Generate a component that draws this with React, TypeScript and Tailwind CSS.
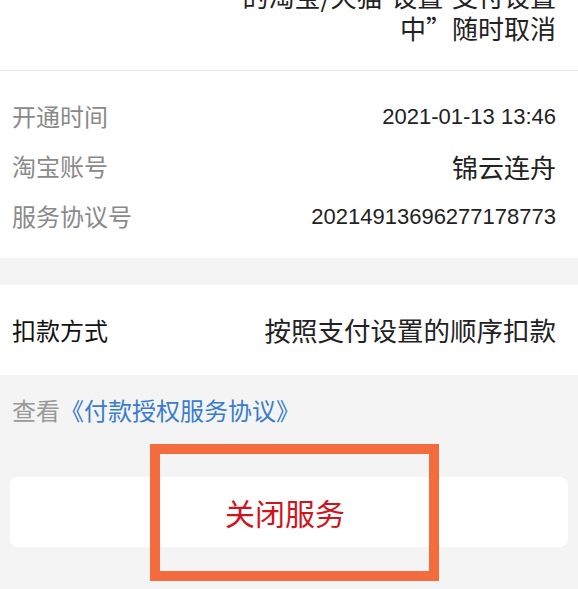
import React from "react";

const cjk = { fontFamily: '"Noto Sans CJK SC", "Noto Sans", sans-serif' };
const num = { fontFamily: '"Liberation Sans", "Noto Sans CJK SC", sans-serif' };

export default function App() {
  return (
    <div className="relative w-[578px] h-[589px] overflow-hidden bg-[#f4f4f4]" style={cjk}>
      <div className="h-[71px] overflow-hidden bg-white border-b border-[#ebebeb]">
        <div className="-mt-[19px] pr-[22px] text-right text-[26px] leading-[30px] text-[#222]">
          <div>
            的淘宝/天猫<span style={num}>“</span>设置<span style={num}>”</span>支付设置
          </div>
          <div>中”随时取消</div>
        </div>
      </div>

      <div className="bg-white pt-[20px] pb-[17px] px-[12px]">
        <div className="flex h-[50px] items-center justify-between pr-[10px]">
          <span className="text-[24px] text-[#8a8a8a]">开通时间</span>
          <span className="text-[22px] text-[#222]" style={num}>2021-01-13 13:46</span>
        </div>
        <div className="flex h-[50px] items-center justify-between pr-[10px]">
          <span className="text-[24px] text-[#8a8a8a]">淘宝账号</span>
          <span className="text-[26px] text-[#222]">锦云连舟</span>
        </div>
        <div className="flex h-[50px] items-center justify-between pr-[10px]">
          <span className="text-[24px] text-[#8a8a8a]">服务协议号</span>
          <span className="text-[22px] text-[#222]" style={num}>20214913696277178773</span>
        </div>
      </div>

      <div className="mt-[27px] flex h-[90px] items-center justify-between bg-white pl-[12px] pr-[22px]">
        <span className="text-[24px] text-[#111]">扣款方式</span>
        <span className="text-[26.5px] text-[#222]">按照支付设置的顺序扣款</span>
      </div>

      <div className="pt-[20px] pl-[12px] text-[24px] leading-[30px]">
        <span className="text-[#999]">查看</span>
        <span className="text-[#3a7ccc]">《付款授权服务协议》</span>
      </div>

      <div className="mx-[10px] mt-[52px] flex h-[70px] items-center justify-center rounded-[8px] bg-white">
        <span className="mr-[8px] text-[30px] text-[#d0141b]">关闭服务</span>
      </div>

      <div className="absolute left-[150px] top-[444px] h-[137px] w-[289px] border-[10px] border-[#f46b3d]" />
    </div>
  );
}
